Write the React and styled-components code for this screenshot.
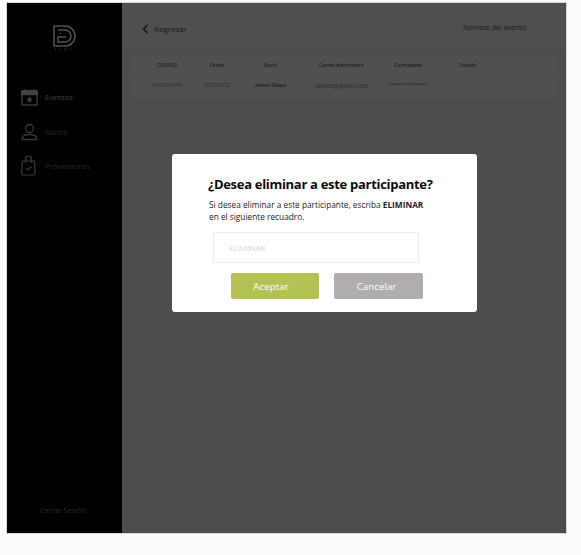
import React from 'react';
import styled, {createGlobalStyle} from 'styled-components';

// ---- styles ------
const Global = createGlobalStyle`
    html, body {
        margin: 0;
        background: #fbfbfb;
    }
    body {
        font-family: "Open Sans", "Noto Sans", sans-serif;
    }
`;

const Page = styled.div`
    width: 581px;
    height: 555px;
    padding: 3px 15px 22px 7px;
    box-sizing: border-box;
`;

const Frame = styled.div`
    position: relative;
    display: flex;
    height: 530px;
    box-shadow: 0 0 0 1px #d8d8d8;
`;

const Sidebar = styled.aside`
    width: 115px;
    flex-shrink: 0;
    background: #000;
    display: flex;
    flex-direction: column;
`;

const Logo = styled.div`
    display: flex;
    flex-direction: column;
    align-items: center;
    gap: 1px;
    padding-top: 22px;
    height: 59px;
    color: #4a4a4a;
    font-size: 3px;
    line-height: 4px;
    letter-spacing: 3px;
`;

const Nav = styled.nav`
    display: flex;
    flex-direction: column;
    gap: 12.5px;
    margin-top: 2px;
    padding-left: 14px;
`;

const NavItem = styled.div`
    display: flex;
    align-items: center;
    gap: ${p => p.$gap}px;
    height: 22px;
    font-size: 7.6px;
    color: ${p => p.$color};
`;

const Logout = styled.div`
    margin-top: auto;
    padding: 0 3px 18px 0;
    text-align: center;
    font-size: 7.3px;
    color: #2b2b2b;
`;

const Main = styled.main`
    flex: 1;
    background: #4d4d4d;
`;

const Header = styled.header`
    height: 47px;
    padding: 0 40px 0 20px;
    display: flex;
    align-items: center;
    justify-content: space-between;
    background: #4f4f4f;
    color: #181818;
`;

const Back = styled.div`
    display: flex;
    align-items: center;
    gap: 5px;
    font-size: 8px;
    padding-top: 4px;
`;

const EventName = styled.span`
    font-size: 7px;
    padding-top: 2px;
`;

const Table = styled.div`
    margin: 5px 8px 0 8px;
    background: #505050;
    height: 45px;
    display: flex;
    flex-direction: column;
`;

const Row = styled.div`
    display: grid;
    grid-template-columns: 54px 46px 60px 82px 52px 68px;
    align-items: center;
    padding-left: 10px;
    padding-top: ${p => (p.$line ? 2 : 0)}px;
    padding-bottom: ${p => (p.$line ? 0 : 4)}px;
    box-sizing: border-box;
    height: ${p => p.$height}px;
    border-bottom: ${p => (p.$line ? '1px solid #4b4b4b' : 'none')};
`;

const Cell = styled.div`
    font-family: "Inter", "Open Sans", sans-serif;
    text-align: center;
    font-size: ${p => p.$size || 5}px;
    font-weight: ${p => (p.$bold ? 600 : 400)};
    color: ${p => p.$color || '#1e1e1e'};
    white-space: nowrap;
`;

const Overlay = styled.div`
    position: absolute;
    left: 165px;
    top: 151px;
    width: 305px;
    height: 158px;
    box-sizing: border-box;
    padding: 21px 0 0 36px;
    background: #fff;
    border-radius: 3px;
`;

const Title = styled.h2`
    margin: 0;
    font-size: 13px;
    line-height: 19px;
    letter-spacing: -0.3px;
    font-weight: 700;
    color: #0c0c0c;
    white-space: nowrap;
`;

const Text = styled.p`
    margin: 5px 0 0 1px;
    font-size: 8.3px;
    line-height: 12px;
    color: #1c1c1c;
    white-space: nowrap;
`;

const Field = styled.div`
    width: 206px;
    height: 31px;
    box-sizing: border-box;
    margin: 9px 0 0 5px;
    padding-left: 15px;
    display: flex;
    align-items: center;
    border: 1px solid #ececec;
    border-radius: 2px;
    font-size: 8px;
    color: #d4d4d4;
`;

const Buttons = styled.div`
    display: flex;
    gap: 15px;
    margin: 10px 0 0 23px;
`;

const Button = styled.div`
    width: ${p => p.$width}px;
    height: 26px;
    box-sizing: border-box;
    padding-right: ${p => p.$shift}px;
    display: flex;
    align-items: center;
    justify-content: center;
    border-radius: 2px;
    background: ${p => p.$bg};
    color: #fff;
    font-size: 9.8px;
`;

function LogoMark() {
    return (
        <svg width="24" height="22" viewBox="0 0 24 22" fill="none" stroke="#4f4f4f" strokeWidth="1.6">
            <path d="M1 1h11a10 10 0 0 1 0 20H1z"/>
            <path d="M5 5h7a6 6 0 0 1 0 12H5v-5h8"/>
            <circle cx="7" cy="8.500" r="0.8" fill="#4f4f4f" stroke="none"/>
        </svg>
    );
}

function CalendarIcon() {
    return (
        <svg width="17" height="18" viewBox="0 0 17 18" fill="none" stroke="#424242" strokeWidth="1.3">
            <rect x="1" y="3" width="15" height="14"/>
            <path d="M1 3h15v3.500H1z" fill="#424242"/>
            <path d="M4 1v3M13 1v3"/>
            <path d="M8.500 8.200l1 2.200 2.300.2-1.800 1.500.6 2.300-2.100-1.200-2.100 1.200.6-2.300-1.800-1.500 2.300-.2z" fill="#424242" stroke="none"/>
        </svg>
    );
}

function UserIcon() {
    return (
        <svg width="17" height="18" viewBox="0 0 17 18" fill="none" stroke="#3a3a3a" strokeWidth="1.3">
            <circle cx="8.500" cy="5.500" r="4"/>
            <path d="M1 16.500c0-3.500 3-5 7.500-5s7.500 1.500 7.500 5z" strokeLinejoin="round"/>
        </svg>
    );
}

function BagIcon() {
    return (
        <svg width="15" height="20" viewBox="0 0 15 20" fill="none" stroke="#3a3a3a" strokeWidth="1.2">
            <path d="M1.500 5h12l.5 12.500a1.500 1.500 0 0 1-1.500 1.500h-10.500a1.500 1.500 0 0 1-1.500-1.500z"/>
            <path d="M4.500 7V3a3 3 0 0 1 6 0v4"/>
            <path d="M5 12l2 2 3.500-3.500"/>
        </svg>
    );
}

function App() {
    return (
        <Page>
            <Global/>
            <Frame>
                <Sidebar>
                    <Logo>
                        <LogoMark/>
                        <span>PERU</span>
                    </Logo>
                    <Nav>
                        <NavItem $gap={7} $color="#424242"><CalendarIcon/>Eventos</NavItem>
                        <NavItem $gap={7} $color="#2a2a2a"><UserIcon/>Socios</NavItem>
                        <NavItem $gap={9} $color="#2a2a2a"><BagIcon/>Proveedores</NavItem>
                    </Nav>
                    <Logout>Cerrar Sesión</Logout>
                </Sidebar>
                <Main>
                    <Header>
                        <Back>
                            <svg width="7" height="10" viewBox="0 0 7 10" fill="none" stroke="#111" strokeWidth="1.5">
                                <path d="M5.500 1L1.500 5l4 4"/>
                            </svg>
                            Regresar
                        </Back>
                        <EventName>Nombre del evento</EventName>
                    </Header>
                    <Table>
                        <Row $height={19} $line>
                            <Cell $bold>CÓDIGO</Cell>
                            <Cell $bold>Fecha</Cell>
                            <Cell $bold>Socio</Cell>
                            <Cell $bold>Correo electrónico</Cell>
                            <Cell $bold>Contraseña</Cell>
                            <Cell $bold>Estado</Cell>
                        </Row>
                        <Row $height={26}>
                            <Cell $color="#2a2a2a">#000123456</Cell>
                            <Cell $color="#2a2a2a">12/12/2020</Cell>
                            <Cell $bold>James Silapu</Cell>
                            <Cell $size={6} $color="#2a2a2a">James@gmail.com</Cell>
                            <Cell $size={6} $color="#1e1e1e">*************</Cell>
                            <Cell $color="#46551a">Activo</Cell>
                        </Row>
                    </Table>
                </Main>
                <Overlay>
                    <Title>¿Desea eliminar a este participante?</Title>
                    <Text>
                        Si desea eliminar a este participante, escriba <b>ELIMINAR</b>
                        <br/>
                        en el siguiente recuadro.
                    </Text>
                    <Field>ELIMINAR</Field>
                    <Buttons>
                        <Button $bg="#b5c154" $shift={8} $width={88}>Aceptar</Button>
                        <Button $bg="#b0adac" $shift={4} $width={89}>Cancelar</Button>
                    </Buttons>
                </Overlay>
            </Frame>
        </Page>
    );
}

export default App;
